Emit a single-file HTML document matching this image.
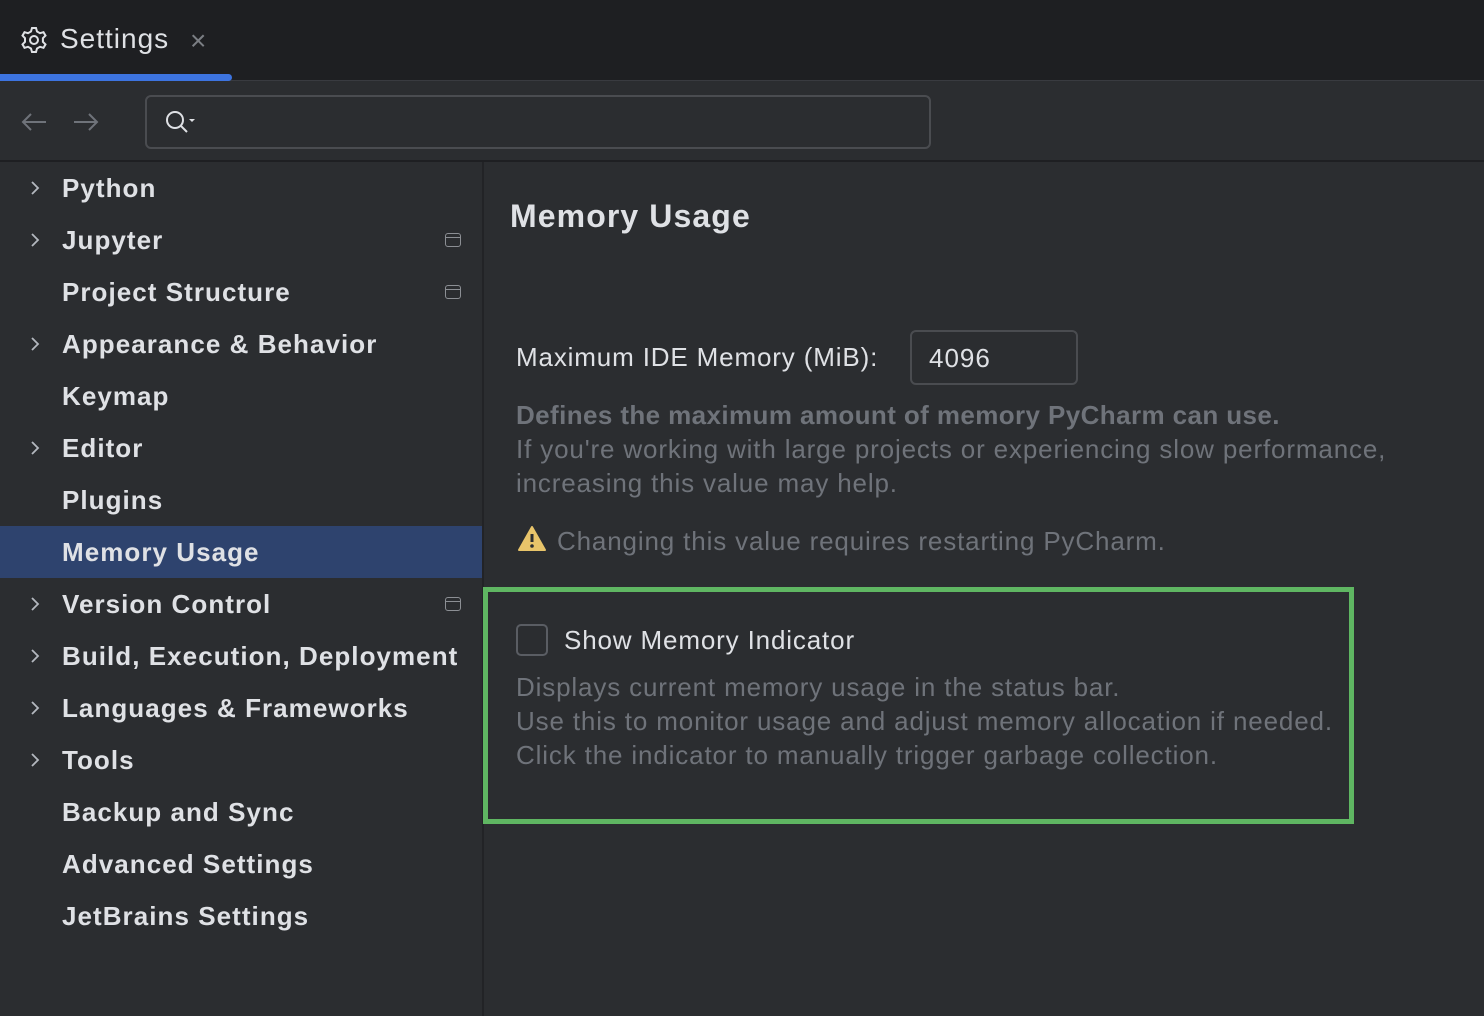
<!DOCTYPE html>
<html><head><meta charset="utf-8"><style>
*{margin:0;padding:0;box-sizing:border-box}
body{width:1484px;height:1016px;background:#2b2d30;font-family:"Liberation Sans",sans-serif;position:relative;overflow:hidden;color:#dfe1e5}
.top{position:absolute;left:0;top:0;width:1484px;height:81px;background:#1e1f22;border-bottom:1px solid #393b40}
.tab{position:absolute;left:60px;top:23px;font-size:28px;color:#dfe1e5;letter-spacing:1px}
.ul{position:absolute;left:0;top:74px;width:232px;height:7px;background:#3d74e0;border-radius:0 4px 4px 0}
.tb{position:absolute;left:0;top:82px;width:1484px;height:80px;border-bottom:2px solid #1e1f22}
.search{position:absolute;left:145px;top:95px;width:786px;height:54px;border:2px solid #4a4c50;border-radius:6px}
.side{position:absolute;left:0;top:162px;width:484px;height:854px;border-right:2px solid #222326}
.it{position:absolute;left:62px;font-size:26px;font-weight:bold;color:#dfe1e5;height:52px;line-height:52px;white-space:nowrap;letter-spacing:1.05px}
.sel{position:absolute;left:0;top:364px;width:482px;height:52px;background:#2e436e}
.chev{position:absolute;left:28px;width:14px;height:14px}
.ic{position:absolute;left:445px;width:16px;height:14px;border:1.5px solid #8c8f94;border-radius:3px}
.ic:after{content:"";position:absolute;left:0;right:0;top:3px;border-top:1.5px solid #8c8f94}
.h{position:absolute;left:510px;top:198px;font-size:32px;font-weight:bold;letter-spacing:1.1px}
.t{position:absolute;left:516px;font-size:26px;white-space:nowrap;letter-spacing:0.85px}
.g{color:#6f737a}
.box{position:absolute;left:483px;top:587px;width:871px;height:237px;border:5px solid #5fb662}
</style></head><body>
<div class="top">
<svg style="position:absolute;left:20px;top:26px" width="28" height="28" viewBox="0 0 28 28" fill="none" stroke="#dfe1e5" stroke-width="2"><path d="M12 2h4l1 3.5 3 1.7 3.5-1 2 3.4-2.6 2.6v3.6l2.6 2.6-2 3.4-3.5-1-3 1.7L16 26h-4l-1-3.5-3-1.7-3.5 1-2-3.4L5 15.8v-3.6L2.5 9.6l2-3.4 3.5 1 3-1.7z"/><circle cx="14" cy="14" r="4"/></svg>
<div class="tab">Settings</div>
<div style="position:absolute;left:190px;top:25px;font-size:28px;color:#7b7e84">×</div>
<div class="ul"></div>
</div>
<div class="tb"></div>
<svg style="position:absolute;left:20px;top:110px" width="80" height="24" viewBox="0 0 80 24" fill="none" stroke="#6f737a" stroke-width="2"><path d="M26 12H3M11 4l-8 8 8 8"/><path d="M54 12h23M69 4l8 8-8 8"/></svg>
<div class="search"><svg style="position:absolute;left:17px;top:12px" width="36" height="26" viewBox="0 0 36 26" fill="none" stroke="#dfe1e5" stroke-width="2"><circle cx="11" cy="11" r="8"/><path d="M17 17l6 6"/><path d="M25 10h6l-3 3z" fill="#dfe1e5" stroke="none"/></svg></div>
<div class="side">
<div class="sel"></div>
</div>
<div style="position:absolute;left:0;top:162px;width:482px">
<div class="it" style="top:0">Python</div>
<div class="it" style="top:52px">Jupyter</div>
<div class="it" style="top:104px">Project Structure</div>
<div class="it" style="top:156px">Appearance &amp; Behavior</div>
<div class="it" style="top:208px">Keymap</div>
<div class="it" style="top:260px">Editor</div>
<div class="it" style="top:312px">Plugins</div>
<div class="it" style="top:364px">Memory Usage</div>
<div class="it" style="top:416px">Version Control</div>
<div class="it" style="top:468px">Build, Execution, Deployment</div>
<div class="it" style="top:520px">Languages &amp; Frameworks</div>
<div class="it" style="top:572px">Tools</div>
<div class="it" style="top:624px">Backup and Sync</div>
<div class="it" style="top:676px">Advanced Settings</div>
<div class="it" style="top:728px">JetBrains Settings</div>
<svg class="chev" style="top:19px" viewBox="0 0 14 14" fill="none" stroke="#b4b8bf" stroke-width="1.8"><path d="M4 1l6 6-6 6"/></svg>
<svg class="chev" style="top:71px" viewBox="0 0 14 14" fill="none" stroke="#b4b8bf" stroke-width="1.8"><path d="M4 1l6 6-6 6"/></svg>
<svg class="chev" style="top:175px" viewBox="0 0 14 14" fill="none" stroke="#b4b8bf" stroke-width="1.8"><path d="M4 1l6 6-6 6"/></svg>
<svg class="chev" style="top:279px" viewBox="0 0 14 14" fill="none" stroke="#b4b8bf" stroke-width="1.8"><path d="M4 1l6 6-6 6"/></svg>
<svg class="chev" style="top:435px" viewBox="0 0 14 14" fill="none" stroke="#b4b8bf" stroke-width="1.8"><path d="M4 1l6 6-6 6"/></svg>
<svg class="chev" style="top:487px" viewBox="0 0 14 14" fill="none" stroke="#b4b8bf" stroke-width="1.8"><path d="M4 1l6 6-6 6"/></svg>
<svg class="chev" style="top:539px" viewBox="0 0 14 14" fill="none" stroke="#b4b8bf" stroke-width="1.8"><path d="M4 1l6 6-6 6"/></svg>
<svg class="chev" style="top:591px" viewBox="0 0 14 14" fill="none" stroke="#b4b8bf" stroke-width="1.8"><path d="M4 1l6 6-6 6"/></svg>
<div class="ic" style="top:71px"></div>
<div class="ic" style="top:123px"></div>
<div class="ic" style="top:435px"></div>
</div>
<div class="h">Memory Usage</div>
<div class="t" style="top:342px">Maximum IDE Memory (MiB):</div>
<div style="position:absolute;left:910px;top:330px;width:168px;height:55px;border:2px solid #4a4c50;border-radius:6px;font-size:26px;padding:11px 0 0 17px;letter-spacing:1px">4096</div>
<div class="t g" style="top:400px;font-weight:bold;letter-spacing:0.4px">Defines the maximum amount of memory PyCharm can use.</div>
<div class="t g" style="top:434px">If you're working with large projects or experiencing slow performance,</div>
<div class="t g" style="top:468px">increasing this value may help.</div>
<svg style="position:absolute;left:517px;top:525px" width="30" height="28" viewBox="0 0 30 28"><path d="M15 2L28 25H2z" fill="#e8c46a" stroke="#e8c46a" stroke-width="2" stroke-linejoin="round"/><path d="M15 9v8" stroke="#2b2d30" stroke-width="3"/><circle cx="15" cy="21" r="1.8" fill="#2b2d30"/></svg>
<div class="t g" style="top:526px;left:557px">Changing this value requires restarting PyCharm.</div>
<div class="box"></div>
<div style="position:absolute;left:516px;top:624px;width:32px;height:32px;border:2px solid #5a5d63;border-radius:5px"></div>
<div class="t" style="top:625px;left:564px">Show Memory Indicator</div>
<div class="t g" style="top:672px">Displays current memory usage in the status bar.</div>
<div class="t g" style="top:706px">Use this to monitor usage and adjust memory allocation if needed.</div>
<div class="t g" style="top:740px">Click the indicator to manually trigger garbage collection.</div>
</body></html>
